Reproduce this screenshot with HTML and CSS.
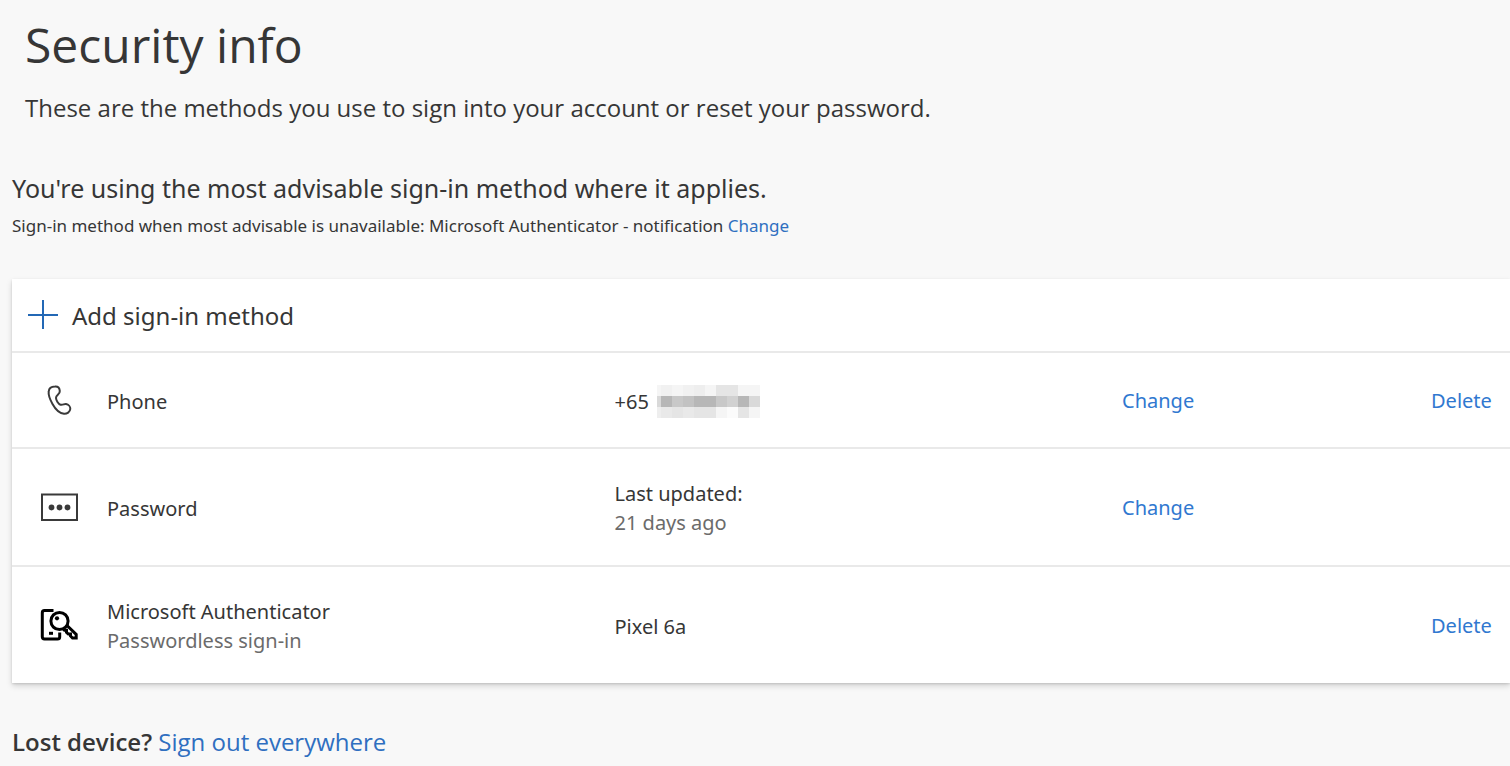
FILE: index.html
```html
<!DOCTYPE html>
<html lang="en">
<head>
<meta charset="utf-8">
<title>Security info</title>
<link rel="stylesheet" href="styles.css">
</head>
<body>
<main class="page">
  <header class="intro">
    <h1 class="title">Security info</h1>
    <p class="lead">These are the methods you use to sign into your account or reset your password.</p>
  </header>

  <section class="default-method">
    <h2 class="status">You're using the most advisable sign-in method where it applies.</h2>
    <p class="fallback">Sign-in method when most advisable is unavailable: Microsoft Authenticator - notification <a class="link" href="#">Change</a></p>
  </section>

  <section class="card">
    <button class="add" type="button">
      <svg class="add-icon" viewBox="0 0 30 30" aria-hidden="true"><path d="M15 0v29M0 15h30"/></svg>
      <span>Add sign-in method</span>
    </button>
    <table class="methods">
      <colgroup>
        <col class="col-icon"><col class="col-name"><col class="col-detail"><col class="col-change"><col class="col-delete">
      </colgroup>
      <tbody>
        <tr class="row row-short">
          <td class="icon-cell">
            <svg class="icon" viewBox="0 0 40 40" aria-hidden="true"><path class="phone" d="M16 5.600C19 5.400 20.600 7.500 20.800 10C21.200 13.500 16.800 14 17 17C17.200 19.500 19.200 23 21.500 23.700C24 24.300 25 22.700 27 23C29.500 23.500 31.500 25.800 31.300 28C31 31 28 33 25 32.800C20 32.300 16 27.500 13.500 23C11 18.500 9.200 14 9.700 10.500C10 7.500 12.500 5.700 16 5.600Z"/></svg>
          </td>
          <td>Phone</td>
          <td>
            <div class="number">
              <span>+65</span>
              <svg class="mosaic" viewBox="0 0 103 33" shape-rendering="crispEdges" role="img" aria-label="Hidden number">
                <path fill="#f5f5f5" d="M0 0h103v33H0z"/>
                <path fill="#f1f1f1" d="M4 0h11v11H4zM26 0h11v11H26z"/>
                <path fill="#eee" d="M37 0h11v11H37zM0 22h4v11H0z"/>
                <path fill="#e5e5e5" d="M59 0h22v11H59zM15 22h11v11H15zM37 22h22v11H37zM81 22h11v11H81z"/>
                <path fill="#d9d9d9" d="M0 11h4v11H0zM92 11h11v11H92z"/>
                <path fill="#b7b7b7" d="M4 11h11v11H4zM37 11h22v11H37zM81 11h11v11H81z"/>
                <path fill="#c8c8c8" d="M15 11h11v11H15zM59 11h11v11H59z"/>
                <path fill="#c2c2c2" d="M26 11h11v11H26z"/>
                <path fill="#d1d1d1" d="M70 11h11v11H70z"/>
                <path fill="#e9e9e9" d="M4 22h11v11H4zM26 22h11v11H26z"/>
                <path fill="#fbfbfb" d="M70 22h11v11H70z"/>
              </svg>
            </div>
          </td>
          <td class="action-cell"><a class="action" href="#">Change</a></td>
          <td class="action-cell"><a class="action" href="#">Delete</a></td>
        </tr>
        <tr class="row">
          <td class="icon-cell">
            <svg class="icon" viewBox="0 0 40 40" aria-hidden="true">
              <rect class="password-box" x="3" y="6.500" width="35" height="25.500"/>
              <g fill="#3a3a3a"><circle cx="12.500" cy="19.500" r="2.900"/><circle cx="20.500" cy="19.500" r="2.900"/><circle cx="28.500" cy="19.500" r="2.900"/></g>
            </svg>
          </td>
          <td>Password</td>
          <td>Last updated:<div class="sub">21 days ago</div></td>
          <td class="action-cell"><a class="action" href="#">Change</a></td>
          <td></td>
        </tr>
        <tr class="row">
          <td class="icon-cell">
            <svg class="icon" viewBox="0 0 40 40" aria-hidden="true">
              <path class="key" d="M14.500 4.500H5.500Q3.300 4.500 3.300 6.700V30.800Q3.300 33 5.500 33H18.500Q20.700 33 20.700 31V26.500"/>
              <path class="key" d="M10 27.300h4"/>
              <circle class="key" cx="20.500" cy="15" r="8.600"/>
              <circle cx="18" cy="12.300" r="2.100"/>
              <path class="key" d="M27.500 19L37.200 28.500V32H33.500L31.500 30V28H29.300L27.500 26.300V24.300H25.500L24 22.500"/>
            </svg>
          </td>
          <td>Microsoft Authenticator<div class="sub">Passwordless sign-in</div></td>
          <td>Pixel 6a</td>
          <td></td>
          <td class="action-cell"><a class="action" href="#">Delete</a></td>
        </tr>
      </tbody>
    </table>
  </section>

  <p class="lost"><strong>Lost device?</strong> <a class="link" href="#">Sign out everywhere</a></p>
</main>
</body>
</html>
```
FILE: styles.css
```css
* { box-sizing: border-box; }

body {
  margin: 0;
  background: #f8f8f8;
  color: #363636;
  font-family: "Segoe UI", "Noto Sans", "Open Sans", sans-serif;
}

h1, h2, p { margin: 0; font-weight: 400; }

.page { padding: 12px 0 0 12px; }
.intro { padding-left: 13px; font-family: "Segoe UI", "Open Sans", sans-serif; }
.title { font-size: 48px; line-height: 66px; }
.lead { margin-top: 12px; font-size: 24px; line-height: 36px; }

.default-method { margin-top: 43px; }
.status { font-size: 25px; line-height: 38px; }
.fallback { margin-top: 7px; font-size: 17px; line-height: 24px; }

.link { color: #2f6fc0; text-decoration: none; }
.action { color: #3078d0; text-decoration: none; }

.card {
  margin-top: 41px;
  background: #fff;
  box-shadow: 0 3px 6px rgba(0, 0, 0, .15), 0 1px 2px rgba(0, 0, 0, .12);
}

.add {
  display: flex;
  align-items: center;
  gap: 14px;
  width: 100%;
  height: 72px;
  padding: 0 16px;
  border: 0;
  background: none;
  color: inherit;
  font: inherit;
  font-size: 24px;
  text-align: left;
}
.add-icon { width: 30px; height: 30px; fill: none; stroke: #2368b5; stroke-width: 2; }

.methods {
  width: 100%;
  table-layout: fixed;
  border-collapse: separate;
  border-spacing: 0;
  font-size: 20px;
  line-height: 29px;
}
.col-icon { width: 95px; }
.col-name { width: 34%; }
.col-detail { width: 34%; }
.col-change { width: 309px; }
.col-delete { width: 79px; }

.row td { height: 118px; padding: 2px 0 0; border-top: 2px solid #e9e9e9; vertical-align: middle; }
.row-short td { height: 96px; }
.row .action-cell { padding: 0; }
.icon { display: block; width: 40px; height: 40px; margin-left: 27px; }
.sub { color: #6b6b6b; }

.number { display: flex; align-items: center; gap: 8px; }
.mosaic { width: 103px; height: 33px; }

.phone, .password-box, .key { fill: none; stroke: #3a3a3a; stroke-width: 2; }
.key { stroke: #000; stroke-width: 3; }

.lost { margin-top: 41px; font-family: "Segoe UI", "Open Sans", sans-serif; font-size: 24px; line-height: 36px; }
.lost strong { font-weight: 600; }
```
